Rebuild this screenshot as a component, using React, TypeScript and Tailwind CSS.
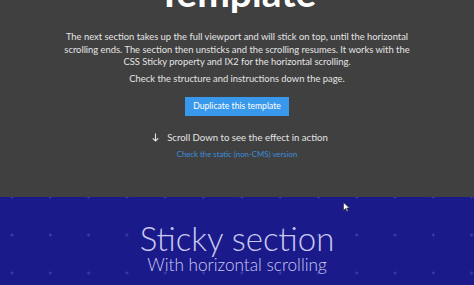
import React from "react";

const Crosses: React.FC = () => (
  <svg className="pointer-events-none absolute inset-0 h-full w-full" aria-hidden="true">
    <defs>
      <pattern id="cross" x="-7" y="-5" width="38.3" height="38" patternUnits="userSpaceOnUse">
        <path d="M19 3.5v3M17.5 5h3" stroke="#4b49b0" strokeWidth="1" opacity="0.85" />
      </pattern>
    </defs>
    <rect width="100%" height="100%" fill="url(#cross)" />
  </svg>
);

const Cursor: React.FC = () => (
  <svg className="absolute left-[343px] top-[5px]" width="7" height="10" viewBox="0 0 7 10" aria-hidden="true">
    <path d="M0.5 0.5v8l2-2 1.5 3 1.2-.6-1.5-2.9h2.8z" fill="#ffffff" stroke="#222" strokeWidth="0.6" />
  </svg>
);

export default function App() {
  return (
    <div className="h-[285px] w-[474px] overflow-hidden font-['Lato',sans-serif]">
      <section className="flex h-[197px] flex-col items-center overflow-hidden bg-[#404040]">
        <h1 className="-mt-[27px] text-[39px] font-bold leading-none text-white">Template</h1>
        <p className="mt-[19px] w-[362px] text-center text-[9.4px] leading-[12.5px] text-[#e4e4e4]">
          The next section takes up the full viewport and will stick on top, until the horizontal
          scrolling ends. The section then unsticks and the scrolling resumes. It works with the
          CSS Sticky property and IX2 for the horizontal scrolling.
        </p>
        <p className="mt-[4px] text-center text-[9.4px] leading-[12.5px] text-[#e4e4e4]">
          Check the structure and instructions down the page.
        </p>
        <button className="mt-[12px] h-[19px] w-[104px] bg-[#3898ec] text-[8.6px] text-white">
          Duplicate this template
        </button>
        <div className="mt-[17px] flex items-center gap-[8px] text-[9.6px] leading-none text-[#e4e4e4]">
          <svg className="ml-[6px]" width="7" height="9" viewBox="0 0 7 9" aria-hidden="true">
            <path d="M3.5 0.5v7.5M0.8 5.3l2.7 2.7 2.7-2.7" fill="none" stroke="#e4e4e4" strokeWidth="1.1" />
          </svg>
          <span>Scroll Down to see the effect in action</span>
        </div>
        <a className="mt-[8px] text-[7.8px] leading-none text-[#3b8fdc]">Check the static (non-CMS) version</a>
      </section>
      <section className="relative flex h-[88px] flex-col items-center bg-[#1b1a8a]">
        <Crosses />
        <Cursor />
        <h2 className="relative mt-[26px] text-[33px] font-light leading-[30px] text-[#c9c9f0]">Sticky section</h2>
        <p className="relative mt-[3px] text-[17.2px] font-light leading-[18px] text-[#c9c9f0]">With horizontal scrolling</p>
      </section>
    </div>
  );
}
